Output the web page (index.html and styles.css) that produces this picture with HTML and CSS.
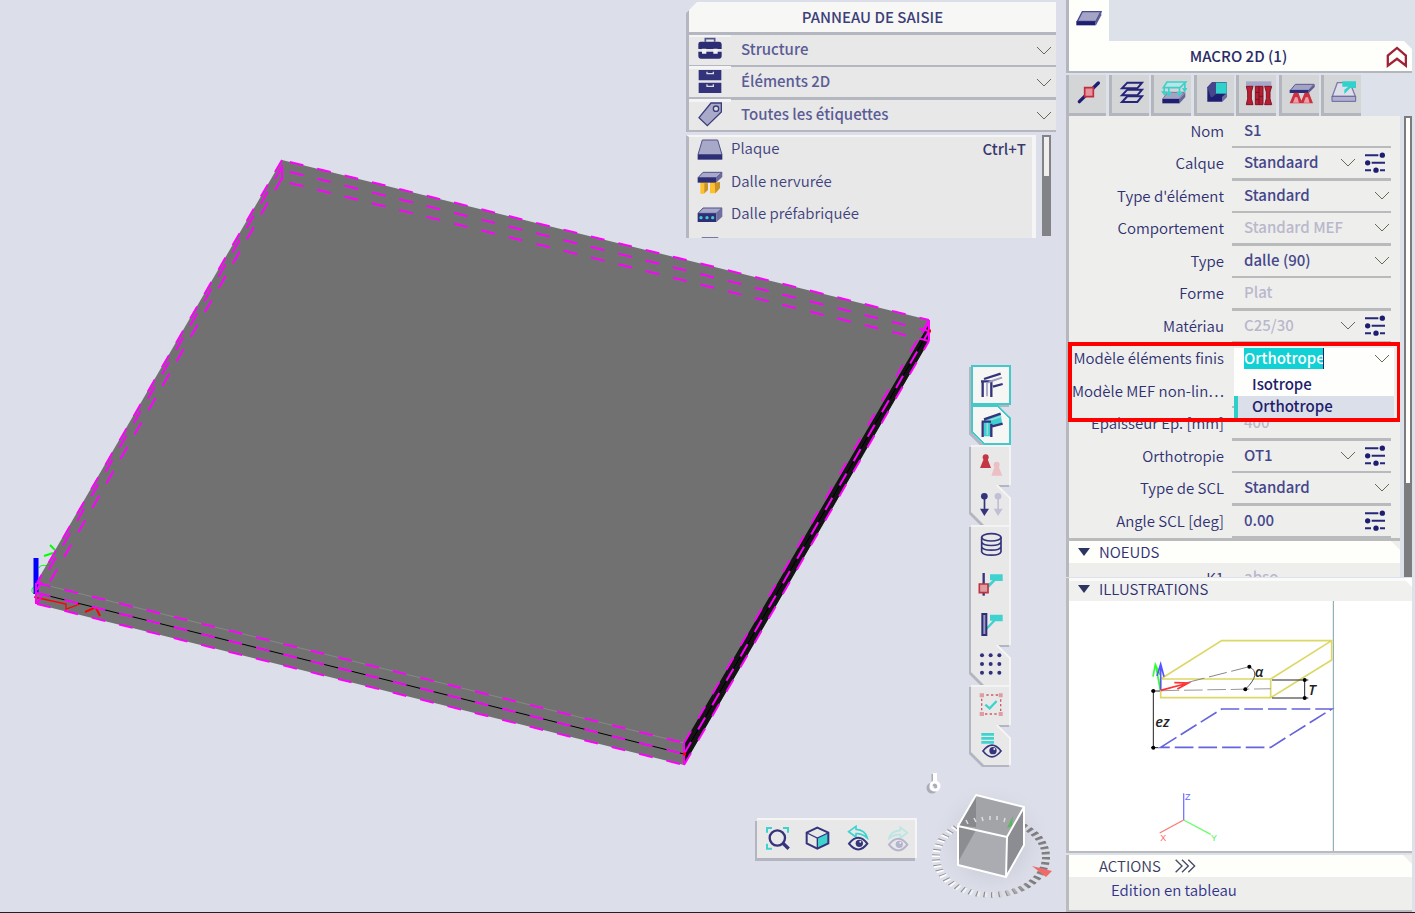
FILE: index.html
```html
<!DOCTYPE html>
<html lang="fr">
<head>
<meta charset="utf-8">
<title>Macro 2D</title>
<link rel="stylesheet" href="styles.css">
</head>
<body>
<svg class="defs" aria-hidden="true">
  <symbol id="chev" viewBox="0 0 16 9"><path d="M1 1l7 7 7-7" fill="none" stroke="currentColor"/></symbol>
  <symbol id="sliders" viewBox="0 0 60 62"><g stroke="#27277a" stroke-width="6"><path d="M0 9h40M20 32h40M0 54h18M45 54h15"/></g><g fill="#1d1d72"><circle cx="52" cy="9" r="8"/><circle cx="8" cy="32" r="8"/><circle cx="33" cy="54" r="8"/></g></symbol>
</svg>
<div class="app">
<main class="viewport">
  <svg class="scene" viewBox="0 0 1066 912" preserveAspectRatio="xMinYMin meet" role="img" aria-label="Vue 3D de la dalle">
    <path d="M50 545l5 5M44 556l9-3" stroke="#0f0" stroke-width="2"/>
    <path d="M34 594q-6-5 4-10l10-18q-8-2-9 2" fill="none" stroke="#0f0" stroke-width="1"/>
    <path d="M282 160L929 320L929 341L684 765L36 604L36 583Z" fill="#717171"/>
    <path d="M929 324L929 341L684 765L684 743Z" fill="#131313"/>
    <path d="M36 558V594" stroke="#00f" stroke-width="5"/>
    <path d="M37 583L684 743" stroke="#888" stroke-width="1"/>
    <path d="M37 593L684 754" stroke="#000" stroke-width="1"/>
    <path d="M929 331L684 754" stroke="#000" stroke-width="1"/>
    <path d="M34 597l32 7v5l14-5" fill="none" stroke="#f00" stroke-width="1.3"/><path d="M85 612l9-4M96 608l4 8" stroke="#f00" stroke-width="2"/>
    <g fill="none" stroke="#f0f" stroke-width="2" stroke-dasharray="14 14.2">
      <path d="M282 160L929 320" stroke-dashoffset="-8"/><path d="M282 170L929 331" stroke-dashoffset="-8"/><path d="M282 181L929 341" stroke-dashoffset="-8"/>
      <path d="M282 160L37 583"/><path d="M282 167L37 590"/><path d="M282 178L37 604"/>
      <path d="M37 583L684 743"/><path d="M37 593L684 754"/><path d="M37 604L684 765"/>
      <path d="M684 743L929 320"/><path d="M684 754L929 331"/><path d="M684 765L929 341"/>
    </g>
    <path d="M36 583V604M684 743V765M929 320V341M929 322L922 333M282 165V180" stroke="#f0f" stroke-width="2"/>
    <path d="M683 754h3M929 331h2" stroke="#f00" stroke-width="3"/>
  </svg>

  <section class="entry">
    <h2 class="entry-title">PANNEAU DE SAISIE</h2>
    <button class="entry-row">
      <svg viewBox="27 105 126 96"><path d="M76 128v-9h28v9" fill="none" stroke="#55558f" stroke-width="5"/><path d="M62 128h55q7 0 8 7v15h-70v-15q0-7 7-7zM55 158h70v14q0 7-7 7H62q-7 0-7-7z" fill="#2c2d72"/><path d="M66 149h13v15H66zM100 149h13v15h-13z" fill="#f2f2f7"/></svg>
      <span>Structure</span><svg class="chev"><use href="#chev"/></svg>
    </button>
    <button class="entry-row odd">
      <svg viewBox="27 200 126 96"><path d="M56 212h68v31H56zM56 250h68v31H56z" fill="#32337a"/><path d="M81 217v6h19v-6M81 255v6h19v-6" fill="none" stroke="#ddd" stroke-width="4"/></svg>
      <span>Éléments 2D</span><svg class="chev"><use href="#chev"/></svg>
    </button>
    <button class="entry-row">
      <svg viewBox="27 299 126 96"><path d="M93 311h31v27l-42 41-25-24z" fill="#a9a9c9" stroke="#3c3d7c" stroke-width="4"/><circle cx="108" cy="328" r="8" fill="#ddd" stroke="#3c3d7c" stroke-width="4"/></svg>
      <span>Toutes les étiquettes</span><svg class="chev"><use href="#chev"/></svg>
    </button>
    <div class="entry-body">
      <ul class="entry-list">
        <li><svg viewBox="48 411 84 96"><path d="M67 420h46l13 44H54z" fill="#a8a8c8" stroke="#50518d" stroke-width="3"/><path d="M53 464h74v15H53z" fill="#2d2e76"/></svg><span>Plaque</span><kbd>Ctrl+T</kbd></li>
        <li><svg viewBox="48 508 84 96"><path d="M61 544h22v22l-10 13H61zM90 544h30v18l-14 16H90z" fill="#fdc12f"/><path d="M73 548h11v20l-11 10zM104 548l16-4v18l-14 16z" fill="#c8922c"/><path d="M69 515h57l-17 16H54z" fill="#a8a8c8" stroke="#50518d" stroke-width="3"/><path d="M53 531h55v15H53z" fill="#2d2e76"/><path d="M108 531l19-17v15l-19 17z" fill="#6a6a9c"/></svg><span>Dalle nervurée</span></li>
        <li><svg viewBox="48 606 84 96"><path d="M69 624h57l-17 16H54z" fill="#a8a8c8" stroke="#50518d" stroke-width="3"/><path d="M53 640h56v26H53z" fill="#2d2e76"/><path d="M109 640l18-17v27l-18 16z" fill="#6f6fa0"/><g fill="#3fc9cc"><circle cx="63" cy="653" r="5"/><circle cx="81" cy="653" r="5"/><circle cx="98" cy="653" r="5"/></g></svg><span>Dalle préfabriquée</span></li>
        <li><svg viewBox="48 702 84 96"><path d="M67 711h46l13 44H54z" fill="#a8a8c8" stroke="#50518d" stroke-width="4"/></svg></li>
      </ul>
      <div class="entry-scroll"><i></i></div>
    </div>
  </section>

  <div class="tools">
    <div class="group">
      <button class="on" aria-label="Barres"><svg viewBox="33 30 120 120"><path d="M68 126V78M94 126V78M63 79h34M72 72l50-16M99 95l29-8" fill="none" stroke="#34347c" stroke-width="7"/><path d="M81 124V84l42-15M88 80l38-12" fill="none" stroke="#9e9fc1" stroke-width="5"/></svg></button>
      <button class="on cut" aria-label="Volumes"><svg viewBox="33 150 120 120"><path d="M72 244v-48l50-20 4 27-30 12v29z" fill="#3fd0cf"/><path d="M82 240v-42l42-14" fill="none" stroke="#8fdfe2" stroke-width="5"/><path d="M68 246v-46M94 246v-40M65 200h28M72 193l50-17M94 215l34-9" fill="none" stroke="#34347c" stroke-width="7"/></svg></button>
    </div>
    <div class="group">
      <button aria-label="Appuis"><svg viewBox="33 270 120 120"><g fill="#c43644"><circle cx="77" cy="307" r="9"/><path d="M72 310h10l11 29H60z"/></g><g fill="#ecbfc4"><circle cx="110" cy="329" r="9"/><path d="M105 332h10l12 30H94z"/></g></svg></button>
      <button class="cut" aria-label="Charges"><svg viewBox="33 390 120 120"><g fill="#34347c"><circle cx="73" cy="424" r="10"/><path d="M71 424h5v37h11l-14 22-13-22h11z"/></g><g fill="#c0bfd6"><circle cx="114" cy="424" r="10"/><path d="M112 424h5v37h11l-14 22-13-22h11z"/></g></svg></button>
    </div>
    <div class="group">
      <button aria-label="Données"><svg viewBox="33 510 120 120"><g fill="none" stroke="#34347c" stroke-width="5"><ellipse cx="94" cy="547" rx="29" ry="11"/><path d="M65 547v43c4 14 54 14 58 0v-43M65 561c4 14 54 14 58 0M65 575c4 14 54 14 58 0"/></g></svg></button>
      <button aria-label="Étiquettes de noeuds"><svg viewBox="33 15 120 120"><path d="M71 39v68" stroke="#34347c" stroke-width="7"/><path d="M90 43h38v20h-22L84 86v-14l14-11h-8z" fill="#3fd3cf"/><path d="M58 72h26v26H58z" fill="#dc9da3" stroke="#c0323f" stroke-width="5"/></svg></button>
      <button aria-label="Étiquettes de barres"><svg viewBox="33 135 120 120"><path d="M90 164h38v20h-22L80 211v-10l18-19h-8z" fill="#3fd3cf"/><path d="M67 162h12v63H67z" fill="#9b9bc0" stroke="#2e2e78" stroke-width="6"/></svg></button>
      <button class="cut" aria-label="Grille"><svg viewBox="33 255 120 120"><g fill="#30307c"><circle cx="66" cy="286" r="6"/><circle cx="92" cy="286" r="6"/><circle cx="118" cy="286" r="6"/><circle cx="66" cy="312" r="6"/><circle cx="92" cy="312" r="6"/><circle cx="118" cy="312" r="6"/><circle cx="66" cy="338" r="6"/><circle cx="92" cy="338" r="6"/><circle cx="118" cy="338" r="6"/></g></svg></button>
    </div>
    <div class="group">
      <button aria-label="Sélection"><svg viewBox="33 375 120 120"><path d="M65 405h57v57H65z" fill="none" stroke="#cf5963" stroke-width="4" stroke-dasharray="7 7"/><path d="M59 400h13v12H59zM116 400h12v12h-12zM59 456h13v12H59zM116 456h12v12h-12z" fill="#dc9da3"/><path d="M76 434l13 11 21-22" fill="none" stroke="#3fd3cf" stroke-width="7"/></svg></button>
      <button class="cut" aria-label="Visibilité"><svg viewBox="33 495 120 120"><path d="M64 523h38M64 535h38M64 547h38" stroke="#3fd3cf" stroke-width="8"/><path d="M69 573q27-35 54 0q-27 35-54 0z" fill="none" stroke="#34347c" stroke-width="5"/><circle cx="99" cy="572" r="11" fill="#34347c"/><circle cx="103" cy="567" r="3" fill="#eee"/></svg></button>
    </div>
  </div>

  <div class="viewbar">
    <button aria-label="Zoom"><svg viewBox="51 159 120 120"><path d="M81 203v-14h15M129 189h15v14M81 236v15h15" fill="none" stroke="#3fd3cf" stroke-width="6"/><circle cx="112" cy="219" r="23" fill="none" stroke="#34347c" stroke-width="7"/><path d="M129 235l17 16" stroke="#34347c" stroke-width="10"/></svg></button>
    <button aria-label="Vue"><svg viewBox="171 159 120 120"><path d="M232 220l32-15v31l-32 15z" fill="#3fd3cf"/><path d="M232 188l33 15v32l-33 16-32-16v-32z" fill="none" stroke="#34347c" stroke-width="6"/><path d="M201 204l31 15 32-15M232 219v31" fill="none" stroke="#34347c" stroke-width="4"/></svg></button>
    <button aria-label="Vue précédente"><svg viewBox="291 159 120 120"><path d="M326 200l22-16v9q28 2 34 26q-18-15-34-13v10z" fill="none" stroke="#3fd3cf" stroke-width="5"/><path d="M327 236q28-35 55 0q-27 35-55 0z" fill="none" stroke="#34347c" stroke-width="6"/><circle cx="358" cy="235" r="11" fill="#34347c"/><circle cx="361" cy="230" r="3" fill="#eee"/></svg></button>
    <button aria-label="Vue suivante" disabled><svg viewBox="411 159 120 120"><path d="M502 203l-21-16v9q-29 2-34 24q16-13 34-11v10z" fill="none" stroke="#b9e5e3" stroke-width="5"/><path d="M447 239q28-35 55 0q-27 35-55 0z" fill="none" stroke="#b5b4cd" stroke-width="6"/><circle cx="478" cy="238" r="11" fill="#b5b4cd"/><circle cx="481" cy="233" r="3" fill="#eee"/></svg></button>
  </div>

  <svg class="gizmo" viewBox="922 768 134 136" role="img" aria-label="Orientation">
    <defs>
      <radialGradient id="glow"><stop offset="0.3" stop-color="#c3c5ce"/><stop offset="1" stop-color="#dcdeea" stop-opacity="0"/></radialGradient>
      <linearGradient id="ring"><stop offset="0" stop-color="#fff"/><stop offset="0.55" stop-color="#e6e6e6"/><stop offset="0.85" stop-color="#7b7b7b"/></linearGradient>
    </defs>
    <circle cx="991" cy="842" r="62" fill="url(#glow)"/>
    <g fill="none" stroke-width="8" transform="translate(991 857) scale(1 .69)">
      <circle r="55" pathLength="276" stroke="#8d8d92" stroke-dasharray="2 4" stroke-dashoffset="-1"/>
      <circle r="55" pathLength="276" stroke="url(#ring)" stroke-dasharray="2 4"/>
    </g>
    <path d="M976 795L1024 807L1007 837L958 826Z" fill="#a3a4a8"/>
    <path d="M976 795V827L958 826Z" fill="#88898d"/>
    <path d="M958 826L1007 837L1006 877L958 865Z" fill="#abacb1"/>
    <path d="M958 826L976 830L958 862Z" fill="#8c8d91"/>
    <path d="M1007 837L1024 807V845L1006 877Z" fill="#8c8d92"/>
    <path d="M968 824l-2-4M976 822l-2-4M983 821l-1-4M990 820v-4M997 820v-4M1004 822l1-4" stroke="#ddd" stroke-width="1.5"/>
    <path d="M1007 828l6-12-1 10z" fill="#57b85e"/>
    <path d="M976 795L1024 807V845L1006 877L958 865V826ZM958 826L1007 837L1024 807M1007 837L1006 877" fill="none" stroke="#fff" stroke-width="2" stroke-linejoin="round"/>
    <path d="M1032 866l20 5-6 6z" fill="#f26a68"/>
    <path d="M933 774v10" stroke="#aaacb6" stroke-width="3"/><circle cx="932" cy="788" r="4" fill="none" stroke="#aaacb6" stroke-width="3"/>
    <path d="M935 773v9" stroke="#fff" stroke-width="4"/><circle cx="935" cy="786" r="4" fill="none" stroke="#fff" stroke-width="3"/>
  </svg>
</main>

<aside class="props">
  <button class="tab" aria-label="Macro 2D"><svg viewBox="27 0 120 123"><path d="M67 35h56l-15 29H52z" fill="#a3a4c6" stroke="#4b4b90" stroke-width="4"/><path d="M49 64h58v12H49z" fill="#1f1f72"/><path d="M107 64l17-30v12l-16 30z" fill="#5d5d98"/></svg></button>
  <header class="props-title"><h1>MACRO 2D (1)</h1>
    <button aria-label="Réduire"><svg viewBox="980 132 66 70"><path d="M985 195v-31l28-23 27 23v31l-27-21z" fill="none" stroke="#9f2238" stroke-width="7"/></svg></button>
  </header>
  <nav class="modes">
    <button aria-label="Noeud"><svg viewBox="27 228 111 114"><path d="M58 308l57-56" stroke="#1d1d72" stroke-width="10" stroke-linecap="round"/><path d="M74 266h26v27H74z" fill="#e2939b" stroke="#c12d3d" stroke-width="5"/></svg></button>
    <button aria-label="Calques"><svg viewBox="154 228 111 114"><g fill="#d4d5d7" stroke="#25257a" stroke-width="6"><path d="M200 292h44l-14 17h-46z"/><path d="M200 272h44l-14 17h-46z"/><path d="M200 251h44l-14 17h-46z"/></g></svg></button>
    <button aria-label="Charges"><svg viewBox="282 228 111 114"><path d="M323 280h50l-16 20h-49z" fill="#a3a4c4" stroke="#77779f" stroke-width="3"/><path d="M307 300h52v13h-52z" fill="#1f1f72"/><path d="M359 300l17-20v14l-17 19z" fill="#666699"/><path d="M321 249h56l-17 17h-50z" fill="#b7e6e6" stroke="#3ecfca" stroke-width="5"/><g fill="#3bd2cb"><path d="M310 264h5v13h7l-9 13-10-13h7zM324 266h5v12h7l-10 15-9-15h7zM356 266h5v12h7l-10 15-9-15h7zM372 250h5v17h5l-8 14-8-14h6z"/></g></svg></button>
    <button aria-label="Ouverture"><svg viewBox="409 228 111 114"><path d="M440 265l14-15h44v44l-14 14h-44z" fill="#1f1f72"/><path d="M484 294l14-12v13l-14 13z" fill="#6d6da0"/><path d="M440 265l14-15h12v35l-10 9h-6z" fill="#46468a"/><path d="M466 251h32v33h-32z" fill="#31d2cb"/></svg></button>
    <button aria-label="Armature"><svg viewBox="537 228 111 114"><path d="M558 247h76v15h-76z" fill="#a6a6c9"/><path d="M559 262h20l-5 17v20l5 18h-20l4-18v-20zM586 262h23v55h-23zM614 262h21l-5 17v20l5 18h-21l5-18v-20z" fill="#b81d31" stroke="#7f1428" stroke-width="3"/><path d="M586 280h11v-18M597 280v37M597 292h12M586 301h11" fill="none" stroke="#6e1525" stroke-width="3"/></svg></button>
    <button aria-label="Appuis"><svg viewBox="664 228 111 114"><path d="M704 256h56l-16 18h-55z" fill="#a3a4c4" stroke="#5b5b93" stroke-width="3"/><path d="M687 273h57v9h-57z" fill="#2b2b78"/><path d="M744 273l18-18v9l-18 18z" fill="#5b5b93"/><path d="M700 281h13l12 32h-38zM732 281h13l12 32h-38z" fill="#cc3142"/><path d="M703 295h7l5 16h-18zM735 295h7l5 16h-18z" fill="#ee9fa4"/></svg></button>
    <button aria-label="Étiquette"><svg viewBox="792 228 111 114"><path d="M832 251h38l16 41H817z" fill="#dddfe9" stroke="#7d7da9" stroke-width="4"/><path d="M816 292h71v15h-71z" fill="#b1b1cf" stroke="#65659b" stroke-width="3"/><path d="M847 247h41v20h-17l-18 18v-13l12-9h-18z" fill="#30d2cb"/></svg></button>
  </nav>

  <div class="scroller">
    <div class="content">
      <form class="form">
        <div class="row"><label for="nom">Nom</label><div class="field"><input id="nom" value="S1"></div></div>
        <div class="row"><label for="calque">Calque</label><div class="field"><select id="calque"><option>Standaard</option></select><svg class="chev"><use href="#chev"/></svg><button type="button" aria-label="Options du calque"><svg><use href="#sliders"/></svg></button></div></div>
        <div class="row"><label for="te">Type d'élément</label><div class="field"><select id="te"><option>Standard</option></select><svg class="chev"><use href="#chev"/></svg></div></div>
        <div class="row"><label for="comp">Comportement</label><div class="field"><select id="comp" disabled><option>Standard MEF</option></select><svg class="chev"><use href="#chev"/></svg></div></div>
        <div class="row"><label for="type">Type</label><div class="field"><select id="type"><option>dalle (90)</option></select><svg class="chev"><use href="#chev"/></svg></div></div>
        <div class="row"><label for="forme">Forme</label><div class="field"><input id="forme" value="Plat" disabled></div></div>
        <div class="row"><label for="mat">Matériau</label><div class="field"><select id="mat" disabled><option>C25/30</option></select><svg class="chev"><use href="#chev"/></svg><button type="button" aria-label="Options du matériau"><svg><use href="#sliders"/></svg></button></div></div>
        <div class="row current"><label for="mef">Modèle éléments finis</label>
          <div class="combo">
            <div class="combo-head"><input id="mef" value="Orthotrope" role="combobox" aria-expanded="true" aria-controls="mef-list"><svg class="chev"><use href="#chev"/></svg></div>
            <ul id="mef-list" role="listbox"><li role="option">Isotrope</li><li role="option" aria-selected="true">Orthotrope</li></ul>
          </div>
          <div class="marker"></div>
        </div>
        <div class="row"><label for="nl">Modèle MEF non-lin…</label><div class="field"><input id="nl"></div></div>
        <div class="row"><label for="ep">Epaisseur Ep. [mm]</label><div class="field"><input id="ep" value="400" disabled></div></div>
        <div class="row"><label for="ot">Orthotropie</label><div class="field"><select id="ot"><option>OT1</option></select><svg class="chev"><use href="#chev"/></svg><button type="button" aria-label="Options d'orthotropie"><svg><use href="#sliders"/></svg></button></div></div>
        <div class="row"><label for="scl">Type de SCL</label><div class="field"><select id="scl"><option>Standard</option></select><svg class="chev"><use href="#chev"/></svg></div></div>
        <div class="row"><label for="ang">Angle SCL [deg]</label><div class="field"><input id="ang" value="0.00"><button type="button" aria-label="Options de l'angle"><svg><use href="#sliders"/></svg></button></div></div>
      </form>
      <section class="nodes">
        <h2 class="head"><i></i>NOEUDS</h2>
        <div class="nodes-body"><div class="row"><label for="k1">K1</label><div class="field"><input id="k1" value="abso" disabled></div></div></div>
      </section>
    </div>
    <div class="scrollbar"><i></i></div>
  </div>

  <section class="illus">
    <h2 class="head"><i></i>ILLUSTRATIONS</h2>
    <svg viewBox="27 63 1029 750" role="img" aria-label="Repère et épaisseur de la dalle">
      <path d="M820 63V813" stroke="#7f9fa8" stroke-width="3"/>
      <g fill="none" stroke="#dcd866" stroke-width="5"><path d="M302 297L485 182H815V240L632 353H302ZM302 297H632V353M632 297L815 182"/></g>
      <path d="M302 502L485 387H815L632 502Z" fill="none" stroke="#6464dc" stroke-width="5" stroke-dasharray="56 15"/>
      <g fill="none" stroke="#888" stroke-width="3"><path d="M302 332H632" stroke="#999" stroke-dasharray="56 14" transform="rotate(-1 302 332)"/><path d="M380 308L568 260" stroke-dasharray="55 14"/></g>
      <path d="M568 260q38 20-12 68" fill="none" stroke="#555" stroke-width="3"/>
      <g stroke="#222" stroke-width="3"><path d="M636 300H745M636 354H745M734 300V354M280 333V503M273 333H300M273 503H295"/></g>
      <g fill="#000"><circle cx="568" cy="260" r="6"/><circle cx="556" cy="328" r="6"/><circle cx="734" cy="300" r="6"/><circle cx="734" cy="354" r="6"/><circle cx="280" cy="333" r="6"/><circle cx="280" cy="503" r="6"/></g>
      <path d="M301 330L287 255M279 290L286 253L301 285" fill="none" stroke="#3f3" stroke-width="5"/>
      <path d="M302 330V252M291 288L302 252L312 290" fill="none" stroke="#55f" stroke-width="5"/>
      <path d="M302 331L385 309M343 308L385 309L352 327" fill="none" stroke="#f33" stroke-width="5"/>
      <g class="dim"><text x="584" y="290">α</text><text x="745" y="346">T</text><text x="286" y="441">ez</text></g>
      <g fill="none" stroke-width="4"><path d="M371 640V720" stroke="#77f"/><path d="M371 720L299 759" stroke="#f77"/><path d="M371 720L452 763" stroke="#6f6"/></g>
      <g class="axis"><text x="375" y="661" fill="#66f">Z</text><text x="301" y="784" fill="#f66">X</text><text x="453" y="782" fill="#5e5">Y</text></g>
    </svg>
  </section>

  <section class="actions">
    <h2 class="head">ACTIONS <svg viewBox="0 0 63 42"><g fill="none" stroke="#444a68" stroke-width="4"><path d="M2 2l19 19L2 40M21 2l19 19-19 19M40 2l19 19-19 19"/></g></svg></h2>
    <a href="#tableau">Edition en tableau</a>
  </section>
</aside>
</div>
</body>
</html>
```
FILE: styles.css
```css
* { box-sizing: border-box; }
body {
  margin: 0;
  background: #dcdeea;
  color: #2f3170;
  font: 350 15px/24px "Noto Sans CJK SC", "Noto Sans", sans-serif;
}
button, input, select { font: inherit; color: inherit; border: 0; padding: 0; margin: 0; background: none; }
h1, h2 { margin: 0; font: inherit; }
ul { list-style: none; margin: 0; padding: 0; }
svg { display: block; }
.defs { position: absolute; width: 0; height: 0; }

.app {
  display: grid;
  grid-template-columns: 1fr 349px;
  min-height: 100vh;
  border-bottom: 1px solid #202028;
}
.viewport { position: relative; overflow: hidden; }
.scene { width: 100%; }
.chev { width: 16px; height: 9px; color: #6d6558; flex: none; }

/* Entry panel */
.entry { position: absolute; top: 2px; right: 10px; width: 370px; }
.entry-title {
  height: 33px;
  padding-top: 3px;
  text-align: center;
  font-weight: 500;
  color: #3d3f7a;
  background: #f7f8f5;
  border-left: 3px solid #b4b6c0;
  border-bottom: 3px solid #b4b6c0;
  clip-path: polygon(11px 0, 100% 0, 100% 100%, 0 100%, 0 11px);
}
.entry-row {
  display: flex;
  align-items: center;
  width: 100%;
  height: 32px;
  text-align: left;
  font-weight: 500;
  color: #5b5c96;
  background: #e8e8e8;
  border-left: 3px solid #b4b6c0;
  border-bottom: 2px solid #b4b6c0;
  padding-right: 4px;
}
.entry-row.odd { height: 33px; border-bottom-width: 3px; }
.entry-row > svg:first-child { width: 42px; height: 32px; background: linear-gradient(#f4f4f6 3px, transparent 3px); flex: none; }
.entry-row span { flex: 1; padding: 0 0 2px 10px; }
.entry-body { display: flex; gap: 6px; height: 103px; margin-top: 3px; }
.entry-list {
  flex: 1;
  overflow: hidden;
  background: #e8e8e8;
  border-left: 3px solid #b4b6c0;
  border-top: 2px solid #f5f5f5;
  border-right: 4px solid #f5f5f5;
  color: #40427d;
}
.entry-list li { display: flex; align-items: center; height: 32px; padding: 0 6px 0 7px; }
.entry-list li:nth-child(even) { height: 33px; }
.entry-list svg { width: 28px; height: 32px; }
.entry-list span { flex: 1; padding: 0 0 10px 7px; }
.entry-list kbd { font: inherit; font-weight: 500; padding-bottom: 8px; color: #38396e; }
.entry-scroll { width: 9px; height: 101px; margin-right: 5px; padding: 2px; background: #828386; }
.entry-scroll i { display: block; height: 39px; background: #f1efee; }

/* Vertical tools */
.tools { position: absolute; right: 55px; top: 365px; filter: drop-shadow(-2px 2px 0 #b3b5c1); }
.group { display: grid; }
.tools button { --edge: #f5f5f5; width: 40px; height: 40px; background: #e8e8e8; box-shadow: inset -2px 0 var(--edge); }
.group button:first-child:not(.on) { box-shadow: inset -2px 2px #f3f3f3; }
.group button:nth-child(n+2):not(.cut) { box-shadow: inset -2px 0 #f3f3f3; }
.tools button.cut {
  clip-path: polygon(0 0, 27px 0, 100% 13px, 100% 100%, 13px 100%, 0 27px);
  background: linear-gradient(225deg, transparent 9px, var(--edge) 9px 11px, transparent 11px), #e8e8e8;
}
.tools button.on { --edge: #43c8cc; background: #f6f7f4; box-shadow: inset 0 0 0 2px var(--edge); }
.tools button.on.cut {
  background:
    linear-gradient(225deg, var(--edge) 11px, transparent 11px),
    linear-gradient(45deg, var(--edge) 11px, transparent 11px), #f6f7f4;
}
.tools svg, .viewbar svg { width: 40px; height: 40px; }

.viewbar {
  position: absolute;
  right: 149px;
  top: 818px;
  display: flex;
  background: #e8e8e8;
  box-shadow: inset -2px 2px #f5f5f5, -2px 3px #b3b5c1;
}
.viewbar button { width: 40px; height: 40px; }
.gizmo { position: absolute; right: 10px; top: 768px; width: 134px; height: 136px; }

/* Property panel */
.props { display: flex; flex-direction: column; padding-right: 3px; background: #dde1ea; }
.tab { width: 43px; height: 41px; background: #fefefb; border-left: 3px solid #b4b6bd; }
.tab svg { width: 40px; height: 41px; }
.props-title {
  display: flex;
  align-items: center;
  height: 32px;
  background: #fefefb;
  border-left: 3px solid #b4b6bd;
  border-bottom: 2px solid #b4b6bd;
  clip-path: polygon(0 0, calc(100% - 8px) 0, 100% 8px, 100% 100%, 0 100%);
  font-weight: 500;
}
.props-title h1 { flex: 1; text-align: center; color: #2b2c66; }
.props-title button { width: 22px; margin: 0 4px 0 -22px; }
.props-title button svg { width: 22px; height: 23px; }
.modes { display: flex; justify-content: space-between; width: 295px; margin-top: 2px; }
.modes button { height: 41px; background: #d4d5d7; border-left: 3px solid #b4b6bd; border-bottom: 3px solid #b4b6bd; }
.modes svg { width: 37px; height: 38px; }

.scroller { display: flex; justify-content: space-between; height: 461px; }
.content { width: 334px; overflow: hidden; }
.form { background: #eeeeed; border-left: 3px solid #b6b8bd; border-bottom: 3px solid #b9bbbd; }
.row {
  position: relative;
  display: grid;
  grid-template-columns: 1fr 159px;
  column-gap: 8px;
  height: 32px;
  padding-right: 9px;
}
.row:nth-child(even) { height: 33px; }
.row label { text-align: right; white-space: nowrap; line-height: 30px; }
.field {
  display: flex;
  align-items: center;
  min-width: 0;
  padding: 0 0 2px 12px;
  border-bottom: 2px solid #b9babb;
  font-weight: 500;
  color: #45478a;
}
.row:nth-child(even) .field { border-bottom-width: 3px; }
.field input, .field select { flex: 1; min-width: 0; width: 20px; height: 28px; line-height: 28px; appearance: none; opacity: 1; }
.field input:disabled, .field select:disabled { color: #b9b8cb; }
.field .chev { margin-right: 1px; }
.field button { margin: 0 6px 0 9px; }
.field button svg { width: 20px; height: 21px; }
.field select + .chev + button { margin-left: 8px; }

.combo {
  position: absolute;
  z-index: 2;
  top: 5px;
  right: 6px;
  width: 160px;
  background: #fefefc;
  font-weight: 500;
  color: #1f206a;
}
.combo-head { display: flex; align-items: flex-start; justify-content: space-between; height: 25px; padding: 0 4px 0 10px; }
.combo-head input { width: 80px; height: 21px; padding-bottom: 2px; background: #12d1d4; color: #fff; border-right: 1px solid #1f206a; }
.combo-head .chev { margin-top: 6px; }
.combo li { height: 23px; line-height: 22px; padding-left: 18px; }
.combo li[aria-selected] { padding-left: 14px; height: 22px; line-height: 20px; background: #dbdfea; border-left: 4px solid #2ccfca; }
.marker { position: absolute; z-index: 3; left: -1px; right: -1px; top: -1px; height: 80px; border: 4px solid #f00; }

.head { display: flex; align-items: center; height: 22px; padding-left: 30px; position: relative; }
.head i { position: absolute; left: 9px; top: 7px; border: 6px solid transparent; border-top: 8px solid #2c3560; border-bottom: 0; }
.nodes { border-left: 3px solid #b6b8bd; background: #eeeeed; }
.nodes .head, .actions .head { background: #fefefb; clip-path: polygon(0 0, calc(100% - 9px) 0, 100% 9px, 100% 100%, 0 100%); }
.scrollbar { width: 8px; padding: 2px 2px 0; background: #7b7c7e; }
.scrollbar i { display: block; height: 365px; background: #fefefb; }

.illus { margin-top: 1px; border-left: 3px solid #b9bbbd; border-bottom: 2px solid #b9bbbd; background: #fff; }
.illus .head { height: 23px; padding-bottom: 4px; background: #f0f0ef; border-top: 3px solid #fafaf8; clip-path: polygon(0 0, calc(100% - 9px) 0, 100% 9px, 100% 100%, 0 100%); }
.illus .head i { top: 4px; }
.illus svg { width: 100%; }
.dim { font: italic 600 44px "Open Sans", sans-serif; fill: #222; }
.axis { font: 400 27px "Liberation Sans", sans-serif; }

.actions { flex: 1; margin-top: 2px; border-left: 3px solid #b9bbbd; border-bottom: 2px solid #b9bbbd; background: #eeeeed; }
.actions .head { gap: 14px; color: #393d66; }
.actions .head svg { width: 21px; height: 14px; }
.actions a { display: block; padding: 1px 0 0 42px; color: #31338a; text-decoration: none; }
```
